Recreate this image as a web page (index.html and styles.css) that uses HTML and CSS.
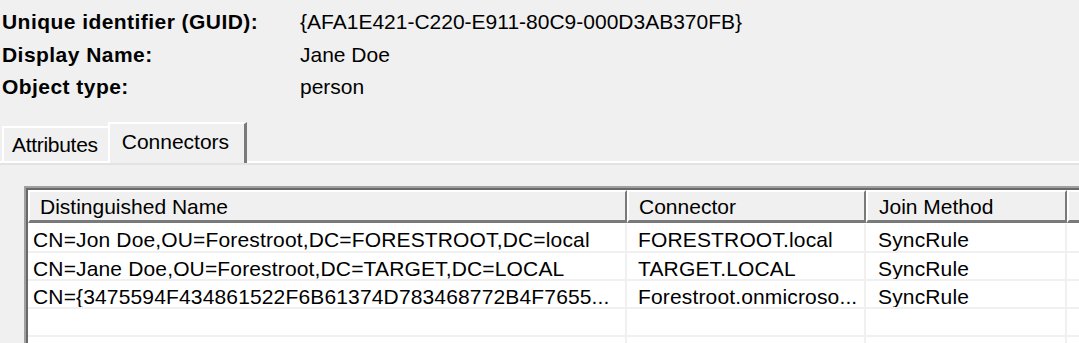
FILE: index.html
```html
<!DOCTYPE html>
<html>
<head>
<meta charset="utf-8">
<link rel="stylesheet" href="styles.css">
</head>
<body>
<div class="info">
  <div class="label">Unique identifier (GUID):</div><div class="value">{AFA1E421-C220-E911-80C9-000D3AB370FB}</div>
  <div class="label">Display Name:</div><div class="value">Jane Doe</div>
  <div class="label">Object type:</div><div class="value">person</div>
</div>
<div class="tabstrip">
  <div class="tab">Attributes</div>
  <div class="tab selected">Connectors</div>
</div>
<div class="panel">
  <div class="listbox">
    <div class="row head">
      <div class="hc c1">Distinguished Name</div>
      <div class="hc c2">Connector</div>
      <div class="hc c3">Join Method</div>
      <div class="hc c4"></div>
    </div>
    <div class="row">
      <div class="cell c1">CN=Jon Doe,OU=Forestroot,DC=FORESTROOT,DC=local</div>
      <div class="cell c2">FORESTROOT.local</div>
      <div class="cell c3">SyncRule</div>
      <div class="cell c4"></div>
    </div>
    <div class="row">
      <div class="cell c1">CN=Jane Doe,OU=Forestroot,DC=TARGET,DC=LOCAL</div>
      <div class="cell c2">TARGET.LOCAL</div>
      <div class="cell c3">SyncRule</div>
      <div class="cell c4"></div>
    </div>
    <div class="row">
      <div class="cell c1">CN={3475594F434861522F6B61374D783468772B4F7655...</div>
      <div class="cell c2">Forestroot.onmicroso...</div>
      <div class="cell c3">SyncRule</div>
      <div class="cell c4"></div>
    </div>
    <div class="row">
      <div class="cell c1"></div>
      <div class="cell c2"></div>
      <div class="cell c3"></div>
      <div class="cell c4"></div>
    </div>
    <div class="row tail">
      <div class="cell c1"></div>
      <div class="cell c2"></div>
      <div class="cell c3"></div>
      <div class="cell c4"></div>
    </div>
  </div>
</div>
</body>
</html>
```
FILE: styles.css
```css
html, body {
  margin: 0;
  padding: 0;
  background: #f0f0f0;
  overflow: hidden;
}
body {
  width: 1079px;
  height: 343px;
  font-family: "Liberation Sans", Arial, sans-serif;
  font-size: 21px;
  color: #000;
}
.info {
  display: grid;
  grid-template-columns: 298px 1fr;
  padding: 6px 0 0 2px;
  line-height: 32.5px;
}
.label {
  font-weight: bold;
  letter-spacing: 0.45px;
}
.tabstrip {
  display: flex;
  align-items: flex-end;
  height: 38px;
  margin-top: 19px;
  padding-left: 2px;
  border-bottom: 2px solid #fff;
  box-shadow: 0 2px 0 #e3e3e3;
}
.tab {
  height: 33px;
  line-height: 33px;
  padding: 0 10px 0 8px;
  border-top: 2px solid #fff;
  border-left: 2px solid #fff;
  letter-spacing: -0.3px;
}
.tab.selected {
  height: 39px;
  line-height: 36px;
  margin-bottom: -2px;
  padding: 0 15px 0 12px;
  background: #f0f0f0;
  border-right: 3px solid #7a7a7a;
  letter-spacing: 0;
}
.panel {
  padding: 23px 0 0 24px;
}
.listbox {
  width: 1100px;
  border-top: 2px solid #a0a0a0;
  border-left: 2px solid #a0a0a0;
  box-shadow: inset 2px 2px 0 #696969;
  padding: 2px 0 0 2px;
  background: #fff;
}
.row {
  display: grid;
  grid-template-columns: 599px 239px 201px 1fr;
}
.head {
  background: #f0f0f0;
}
.hc {
  height: 28px;
  line-height: 30px;
  border-top: 2px solid #fff;
  border-left: 2px solid #fff;
  border-right: 2px solid #7a7a7a;
  border-bottom: 3px solid #7a7a7a;
  padding-left: 10px;
  white-space: nowrap;
  overflow: hidden;
}
.hc.c3 { padding-left: 11px; }
.cell {
  height: 26px;
  line-height: 32px;
  border-bottom: 2px solid #f0f0f0;
  border-right: 2px solid #f0f0f0;
  white-space: nowrap;
  overflow: hidden;
  padding-left: 11px;
  letter-spacing: 0.15px;
}
.cell.c1 { padding-left: 5px; }
.cell.c3 { padding-left: 12px; }
.head + .row .cell {
  height: 27px;
  margin-top: 1px;
}
.tail .cell {
  height: 8px;
  border-bottom: 0;
}
```
